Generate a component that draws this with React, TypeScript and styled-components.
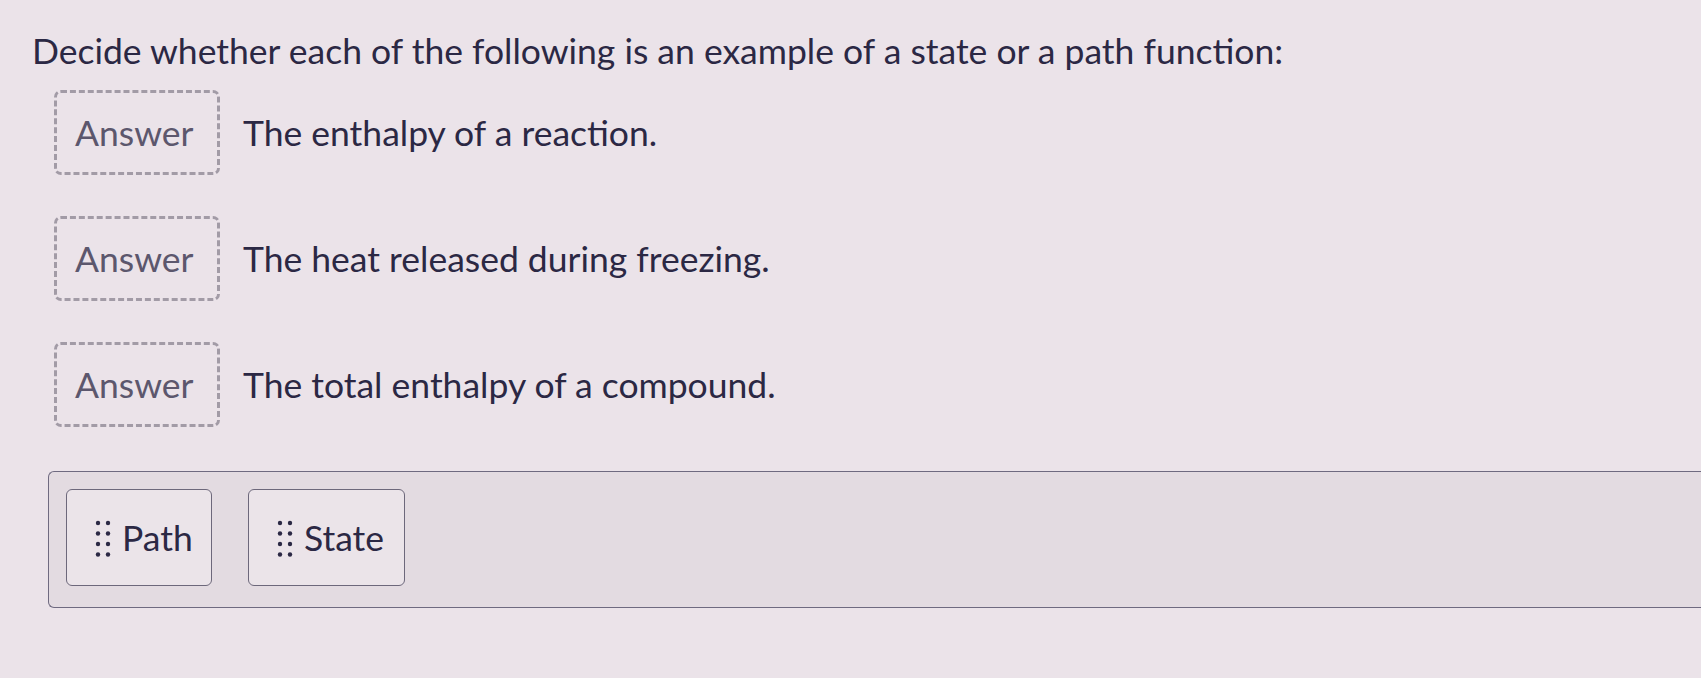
import React from "react";
import styled, { createGlobalStyle } from "styled-components";

const Global = createGlobalStyle`
  html, body { margin: 0; padding: 0; }
  body {
    background: #ebe3e9;
    font-family: Lato, "Open Sans", sans-serif;
    color: #2b2844;
    overflow: hidden;
  }
`;

const Page = styled.div`
  width: 1701px;
  height: 678px;
  padding: 30px 0 0 32px;
  box-sizing: border-box;
`;

const Title = styled.h1`
  margin: 0;
  font-size: 35.5px;
  font-weight: 400;
  line-height: 42px;
  letter-spacing: 0;
`;

const Rows = styled.div`
  display: flex;
  flex-direction: column;
  gap: 41px;
  margin: 18px 0 0 22px;
`;

const Row = styled.div`
  display: flex;
  align-items: center;
  gap: 23px;
`;

const Drop = styled.div`
  width: 166px;
  height: 85px;
  box-sizing: border-box;
  border: 3px dashed #a29ba6;
  border-radius: 7px;
  display: flex;
  align-items: center;
  padding-left: 18px;
  font-size: 35.5px;
  color: #5c576d;
`;

const Prompt = styled.span`
  font-size: 35.5px;
`;

const Bank = styled.div`
  margin: 44px 0 0 16px;
  height: 137px;
  box-sizing: border-box;
  border: 1.5px solid #6f6a80;
  border-right: none;
  border-radius: 6px 0 0 6px;
  background: #e3dbe1;
  display: flex;
  gap: 36px;
  padding: 17px 0 0 17px;
`;

const Chip = styled.div<{ $w: number }>`
  width: ${(p) => p.$w}px;
  height: 97px;
  box-sizing: border-box;
  border: 1.5px solid #6d687b;
  border-radius: 6px;
  background: #ebe4e9;
  display: flex;
  align-items: center;
  gap: 11px;
  padding-left: 28px;
  font-size: 35.5px;
  color: #2b2844;
`;

const Grip = () => (
  <svg width="16" height="38" viewBox="0 0 16 38" aria-hidden>
    {[0, 1, 2, 3].map((r) =>
      [0, 1].map((c) => (
        <circle key={`${r}-${c}`} cx={3 + c * 10} cy={4 + r * 10.5} r={2.2} fill="#2b2844" />
      ))
    )}
  </svg>
);

const prompts = [
  "The enthalpy of a reaction.",
  "The heat released during freezing.",
  "The total enthalpy of a compound.",
];

export default function App() {
  return (
    <Page>
      <Global />
      <Title>Decide whether each of the following is an example of a state or a path function:</Title>
      <Rows>
        {prompts.map((p) => (
          <Row key={p}>
            <Drop>Answer</Drop>
            <Prompt>{p}</Prompt>
          </Row>
        ))}
      </Rows>
      <Bank>
        <Chip $w={146}>
          <Grip />
          Path
        </Chip>
        <Chip $w={157}>
          <Grip />
          State
        </Chip>
      </Bank>
    </Page>
  );
}
